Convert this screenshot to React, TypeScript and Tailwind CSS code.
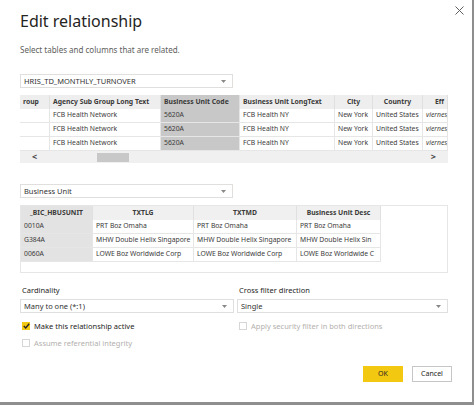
import React from 'react';

const font = { fontFamily: '"Noto Sans", "Open Sans", sans-serif' };

const Dropdown = ({ value, width }: { value: string; width: string }) => (
  <div className={`${width} h-[14px] border border-[#e1dfdd] bg-white flex items-center justify-between pl-[3px] pr-[6px]`}>
    <span className="text-[7.5px] leading-[12px] text-[#333]">{value}</span>
    <svg width="5" height="3" viewBox="0 0 5 3">
      <path d="M0 0 L5 0 L2.5 3 Z" fill="#8a8886" />
    </svg>
  </div>
);

type Col = { w: string; label: string; align?: string; hl?: boolean };

const topCols: Col[] = [
  { w: 'w-[30px]', label: 'roup' },
  { w: 'w-[111px]', label: 'Agency Sub Group Long Text' },
  { w: 'w-[79px]', label: 'Business Unit Code', hl: true },
  { w: 'w-[95px]', label: 'Business Unit LongText' },
  { w: 'w-[38px]', label: 'City', align: 'justify-center' },
  { w: 'w-[50px]', label: 'Country', align: 'justify-center' },
  { w: 'w-[25px]', label: 'Eff', align: 'justify-end' },
];

const topRow = ['', 'FCB Health Network', '5620A', 'FCB Health NY', 'New York', 'United States', 'viernes,'];

const bottomCols: Col[] = [
  { w: 'w-[72px]', label: '_BIC_HBUSUNIT', hl: true },
  { w: 'w-[101px]', label: 'TXTLG' },
  { w: 'w-[103px]', label: 'TXTMD' },
  { w: 'w-[84px]', label: 'Business Unit Desc' },
];

const bottomRows = [
  ['0010A', 'PRT Boz Omaha', 'PRT Boz Omaha', 'PRT Boz Omaha'],
  ['G384A', 'MHW Double Helix Singapore', 'MHW Double Helix Singapore', 'MHW Double Helix Sin'],
  ['0060A', 'LOWE Boz Worldwide Corp', 'LOWE Boz Worldwide Corp', 'LOWE Boz Worldwide C'],
];

const Check = ({ checked, disabled, label }: { checked?: boolean; disabled?: boolean; label: string }) => (
  <div className="flex items-center h-[12px] pl-[2px] gap-[4px]">
    {checked ? (
      <div className="w-[8px] h-[8px] bg-[#f2c811] flex items-center justify-center">
        <svg width="7" height="6" viewBox="0 0 7 6">
          <path d="M0.8 3 L2.7 4.9 L6.2 0.8" stroke="#252423" strokeWidth="1.4" fill="none" />
        </svg>
      </div>
    ) : (
      <div className="w-[8px] h-[8px] border border-[#d6d6d6] bg-white" />
    )}
    <span className={`text-[7.5px] leading-[12px] ${disabled ? 'text-[#b3b0ad]' : 'text-[#252423]'}`}>{label}</span>
  </div>
);

export default function App() {
  return (
    <div className="w-[474px] h-[405px] bg-[#8e8e8e]" style={font}>
      <div className="relative w-[472px] h-[402px] bg-white px-[20px]">
        <svg className="absolute right-[8px] top-[6px]" width="9" height="9" viewBox="0 0 9 9">
          <path d="M0.5 0.5 L8.5 8.5 M8.5 0.5 L0.5 8.5" stroke="#605e5c" strokeWidth="1" />
        </svg>

        <h1 className="pt-[10px] text-[16px] leading-[22px] text-[#252423]">Edit relationship</h1>
        <p className="mt-[12px] text-[8px] leading-[12px] text-[#605e5c]">Select tables and columns that are related.</p>

        <div className="mt-[18px]">
          <Dropdown value="HRIS_TD_MONTHLY_TURNOVER" width="w-[213px]" />
        </div>

        {/* top table preview */}
        <div className="mt-[7px] w-[428px] text-[6.8px] text-[#3b3a39]">
          <div className="flex h-[14px] bg-[#eeeeee] font-bold">
            {topCols.map((c, i) => (
              <div
                key={i}
                className={`${c.w} flex items-center px-[3px] overflow-hidden whitespace-nowrap border-r border-[#e0e0e0] ${c.align ?? ''} ${c.hl ? 'bg-[#c8c8c8]' : ''}`}
              >
                {c.label}
              </div>
            ))}
          </div>
          {[0, 1, 2].map(r => (
            <div key={r} className="flex h-[14px] border-b border-[#e6e6e6]">
              {topCols.map((c, i) => (
                <div
                  key={i}
                  className={`${c.w} flex items-center px-[3px] overflow-hidden whitespace-nowrap border-r border-[#e6e6e6] ${i === 6 ? 'italic' : ''} ${c.hl ? 'bg-[#c8c8c8] border-[#dcdcdc]' : 'bg-white'}`}
                >
                  {topRow[i]}
                </div>
              ))}
            </div>
          ))}
          <div className="flex items-center h-[12px] bg-[#f0f0f0]">
            <span className="ml-[12px] w-[10px] text-[9px] font-bold text-[#444] leading-[12px]">&lt;</span>
            <div className="ml-[55px] w-[32px] h-[9px] bg-[#c8c8c8]" />
            <span className="ml-auto mr-[12px] text-[9px] font-bold text-[#444] leading-[12px]">&gt;</span>
          </div>
        </div>

        <div className="mt-[21px]">
          <Dropdown value="Business Unit" width="w-[213px]" />
        </div>

        {/* bottom table preview */}
        <div className="mt-[7px] w-[428px] h-[68px] border border-[#e6e6e6] text-[6.8px] text-[#3b3a39]">
          <div className="flex h-[14px] font-bold">
            {bottomCols.map((c, i) => (
              <div
                key={i}
                className={`${c.w} flex items-center justify-center px-[3px] overflow-hidden whitespace-nowrap border-r border-[#e0e0e0] ${c.hl ? 'bg-[#e3e3e3]' : 'bg-[#f0f0f0]'}`}
              >
                {c.label}
              </div>
            ))}
          </div>
          {bottomRows.map((row, r) => (
            <div key={r} className="flex h-[14px]">
              {bottomCols.map((c, i) => (
                <div
                  key={i}
                  className={`${c.w} flex items-center px-[3px] overflow-hidden whitespace-nowrap border-r border-b border-[#e6e6e6] ${c.hl ? 'bg-[#e3e3e3]' : 'bg-white'}`}
                >
                  {row[i]}
                </div>
              ))}
            </div>
          ))}
        </div>

        <div className="mt-[11px] w-[428px] grid grid-cols-[214px_211px] gap-x-[3px]">
          <div>
            <div className="text-[7.5px] leading-[12px] text-[#252423] pl-[2px]">Cardinality</div>
            <div className="mt-[3px]">
              <Dropdown value="Many to one (*:1)" width="w-[214px]" />
            </div>
            <div className="mt-[7px]">
              <Check checked label="Make this relationship active" />
            </div>
            <div className="mt-[5px]">
              <Check disabled label="Assume referential integrity" />
            </div>
          </div>
          <div>
            <div className="text-[7.5px] leading-[12px] text-[#252423] pl-[2px]">Cross filter direction</div>
            <div className="mt-[3px]">
              <Dropdown value="Single" width="w-[211px]" />
            </div>
            <div className="mt-[7px]">
              <Check disabled label="Apply security filter in both directions" />
            </div>
          </div>
        </div>

        <div className="mt-[17px] flex justify-end gap-[9px]">
          <button className="w-[40px] h-[16px] bg-[#f2c811] text-[7px] text-[#252423]">OK</button>
          <button className="w-[40px] h-[16px] bg-white border border-[#c8c6c4] text-[7px] text-[#252423]">Cancel</button>
        </div>
      </div>
    </div>
  );
}
